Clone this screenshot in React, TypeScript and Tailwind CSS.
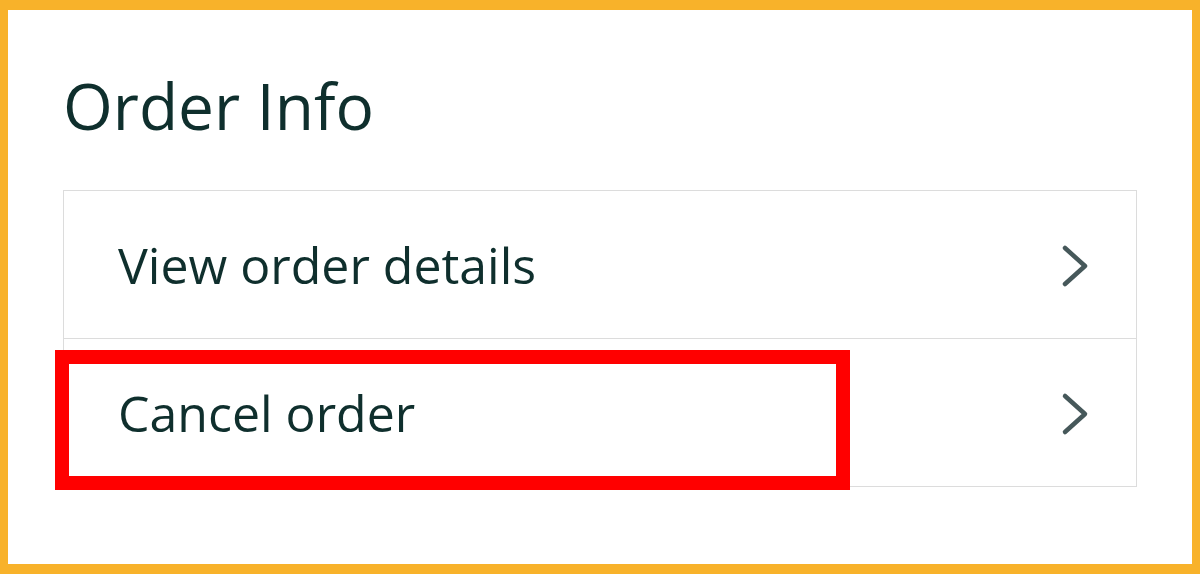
import { ReactNode } from 'react';

const FONT = { fontFamily: '"Open Sans", "Noto Sans", Arial, sans-serif' };

export default function App() {
  return (
    <div
      className="box-border h-[574px] w-[1200px] border-x-[8px] border-t-[10px] border-b-[10px] border-[#f8b22a] bg-white px-[55px] pt-[64px]"
      style={FONT}
    >
      <h1 className="text-[64px] leading-none font-normal text-[#0f2f2d]">Order Info</h1>

      <div className="mt-[52px] border border-[#dcdcdc]">
        <OrderRow label="View order details" />
        <div className="relative border-t border-[#dcdcdc]">
          <OrderRow label="Cancel order" />
          {/* highlight annotation */}
          <div className="pointer-events-none absolute top-[11px] left-[-9px] h-[140px] w-[795px] border-[14px] border-[#ff0000]" />
        </div>
      </div>
    </div>
  );
}

function OrderRow({ label }: { label: string }): ReactNode {
  return (
    <div className="flex h-[147px] items-center justify-between pr-[46px] pl-[54px]">
      <span className="text-[50px] leading-none text-[#0f2f2d]">{label}</span>
      <Chevron />
    </div>
  );
}

function Chevron() {
  return (
    <svg width="30" height="44" viewBox="0 0 30 44" fill="none" className="mt-[2px]">
      <path d="M5 4 L25 22 L5 40" stroke="#46585a" strokeWidth="4.5" strokeLinecap="round" strokeLinejoin="round" />
    </svg>
  );
}
